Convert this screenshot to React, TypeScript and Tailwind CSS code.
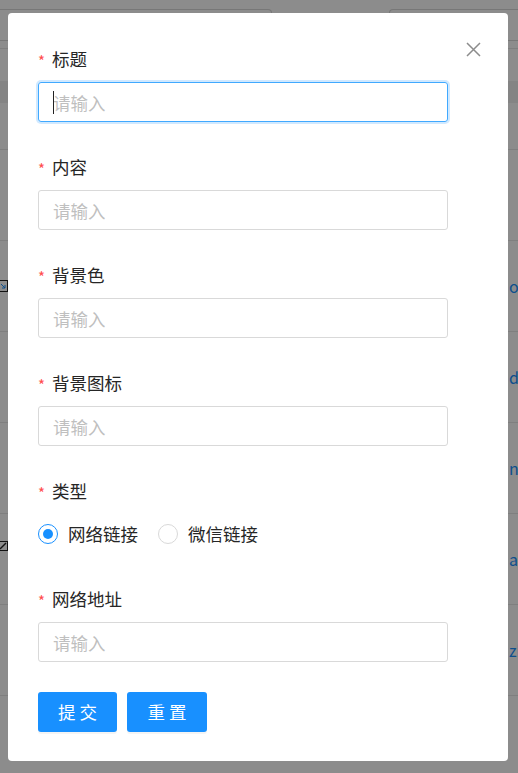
import React, { useState } from 'react';

const rows = [
  { text: '' },
  { text: 'order_link' },
  { text: 'dianping' },
  { text: 'news' },
  { text: 'art' },
  { text: 'zbox' },
];

const Field: React.FC<{ label: string; focused?: boolean }> = ({ label, focused }) => (
  <div className="mb-[32px]">
    <div className="mb-[10px] flex h-[26px] items-center leading-[26px]">
      <span className="mr-[6px] w-[8px] pt-[3px] text-[15px] leading-none text-[#ff4d4f]">*</span>
      <span className="text-[17.5px] text-[#262626]">{label}</span>
    </div>
    <div className="relative w-[410px]">
      <input
        className={
          focused
            ? 'h-[40px] w-full rounded-[3px] border border-[#40a9ff] px-[14px] text-[17.5px] text-[#262626] shadow-[0_0_0_2px_rgba(24,144,255,0.2)] outline-none placeholder:text-[#bfbfbf]'
            : 'h-[40px] w-full rounded-[3px] border border-[#d9d9d9] px-[14px] text-[17.5px] text-[#262626] outline-none placeholder:text-[#bfbfbf]'
        }
        placeholder="请输入"
        readOnly
      />
      {focused && <span className="absolute left-[15px] top-[9px] h-[23px] w-[1px] bg-[#222]" />}
    </div>
  </div>
);

export default function App() {
  const [kind, setKind] = useState<'web' | 'wx'>('web');

  return (
    <div
      className="relative h-[773px] w-[518px] overflow-hidden bg-white"
      style={{ fontFamily: '"Noto Sans CJK SC", "Liberation Sans", sans-serif' }}
    >
      {/* page behind the modal */}
      <div className="flex h-[40px] items-start pt-[9px]">
        <div className="h-[32px] w-[272px] rounded-r border border-l-0 border-[#d9d9d9]" />
        <div className="ml-[117px] h-[32px] flex-1 rounded-l border border-r-0 border-[#d9d9d9]" />
      </div>
      <div className="mt-[8px] border-t border-[#e8e8e8]" />
      <div className="mt-[32px] h-[22px] bg-[#f0f0f0]" />
      <div className="h-[47px] border-b border-[#e8e8e8]" />
      {rows.map((r, i) => (
        <div key={i} className="flex h-[91px] items-center border-b border-[#e8e8e8]">
          <div className="w-[509px] shrink-0">
            {i === 1 && (
              <svg width="10" height="12" viewBox="0 0 10 12" className="-ml-[2px] text-[#222]">
                <rect x="0.5" y="0.5" width="9" height="11" fill="none" stroke="currentColor" />
                <path d="M3 4 L7 8 M7 5 V8 H4" fill="none" stroke="#1890ff" />
              </svg>
            )}
            {i === 4 && (
              <svg width="10" height="22" viewBox="0 0 10 22" className="-mt-[14px] -ml-[2px]">
                <rect x="0.5" y="0.5" width="9" height="9" fill="none" stroke="#222" />
                <path d="M2 8 L8 2" stroke="#222" strokeWidth="1.5" />
                <path d="M1 10 V22" stroke="#1890ff" strokeWidth="2" />
              </svg>
            )}
          </div>
          <span className="whitespace-nowrap text-[16px] text-[#1890ff]">{r.text}</span>
        </div>
      ))}

      {/* mask */}
      <div className="absolute inset-0 bg-black/45" />

      {/* modal */}
      <div className="absolute left-[8px] top-[13px] w-[500px] rounded-[4px] bg-white pl-[30px] pb-[29px] pt-[33px]">
        <button className="absolute right-[25px] top-[26px] flex h-[20px] w-[20px] items-center justify-center text-[#8c8c8c]">
          <svg width="15" height="15" viewBox="0 0 15 15">
            <path d="M1 1 L14 14 M14 1 L1 14" stroke="currentColor" strokeWidth="1.5" />
          </svg>
        </button>

        <Field label="标题" focused />
        <Field label="内容" />
        <Field label="背景色" />
        <Field label="背景图标" />

        <div className="mb-[32px]">
          <div className="mb-[10px] flex h-[26px] items-center leading-[26px]">
            <span className="mr-[6px] w-[8px] pt-[3px] text-[15px] leading-none text-[#ff4d4f]">*</span>
            <span className="text-[17.5px] text-[#262626]">类型</span>
          </div>
          <div className="mt-[2px] flex h-[40px] items-center">
            <label className="mr-[20px] flex cursor-pointer items-center" onClick={() => setKind('web')}>
              <span
                className={
                  kind === 'web'
                    ? 'flex h-[20px] w-[20px] items-center justify-center rounded-full border border-[#1890ff]'
                    : 'flex h-[20px] w-[20px] items-center justify-center rounded-full border border-[#d9d9d9]'
                }
              >
                {kind === 'web' && <span className="h-[10px] w-[10px] rounded-full bg-[#1890ff]" />}
              </span>
              <span className="ml-[10px] text-[17.5px] text-[#262626]">网络链接</span>
            </label>
            <label className="flex cursor-pointer items-center" onClick={() => setKind('wx')}>
              <span
                className={
                  kind === 'wx'
                    ? 'flex h-[20px] w-[20px] items-center justify-center rounded-full border border-[#1890ff]'
                    : 'flex h-[20px] w-[20px] items-center justify-center rounded-full border border-[#d9d9d9]'
                }
              >
                {kind === 'wx' && <span className="h-[10px] w-[10px] rounded-full bg-[#1890ff]" />}
              </span>
              <span className="ml-[10px] text-[17.5px] text-[#262626]">微信链接</span>
            </label>
          </div>
        </div>

        <Field label="网络地址" />

        <div className="-mt-[2px] flex gap-[10px]">
          <button className="flex h-[40px] w-[79px] items-center justify-center rounded-[3px] bg-[#1890ff] text-[17.5px] text-white shadow-[0_2px_0_rgba(0,0,0,0.045)]">
            提 交
          </button>
          <button className="flex h-[40px] w-[80px] items-center justify-center rounded-[3px] bg-[#1890ff] text-[17.5px] text-white shadow-[0_2px_0_rgba(0,0,0,0.045)]">
            重 置
          </button>
        </div>
      </div>
    </div>
  );
}
